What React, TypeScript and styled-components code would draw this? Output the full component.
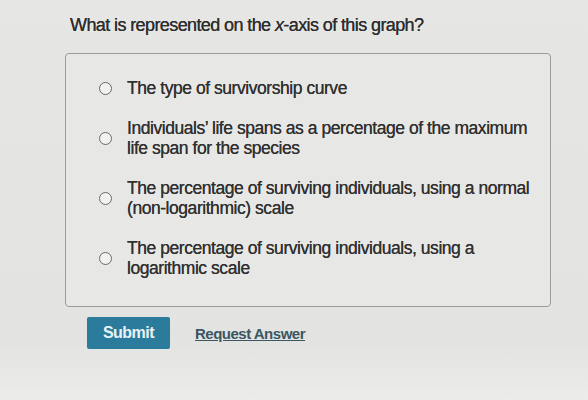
import { useState } from 'react';
import styled, { createGlobalStyle } from 'styled-components';

const GlobalStyle = createGlobalStyle`
  html, body {
    margin: 0;
    padding: 0;
    background: #e4e4e2;
  }
  body {
    font-family: 'Liberation Sans', Arial, sans-serif;
    color: #353535;
  }
`;

const choices = [
  'The type of survivorship curve',
  'Individuals’ life spans as a percentage of the maximum life span for the species',
  'The percentage of surviving individuals, using a normal (non-logarithmic) scale',
  'The percentage of surviving individuals, using a logarithmic scale',
];

const App = () => {
  const [selected, setSelected] = useState<number | null>(null);

  return (
    <>
      <GlobalStyle />
      <Page>
        <Question>
          What is represented on the <em>x</em>-axis of this graph?
        </Question>

        <ChoiceBox>
          {choices.map((text, i) => (
            <Choice key={i} onClick={() => setSelected(i)}>
              <Radio $checked={selected === i} />
              <ChoiceText>{text}</ChoiceText>
            </Choice>
          ))}
        </ChoiceBox>

        <Actions>
          <SubmitButton>Submit</SubmitButton>
          <RequestLink href="#">Request Answer</RequestLink>
        </Actions>
      </Page>
    </>
  );
};

const Page = styled.div`
  width: 588px;
  height: 400px;
  box-sizing: border-box;
  padding: 14px 37px 0 65px;
  background: linear-gradient(180deg, #e6e6e4 0%, #e3e3e1 85%, #ececea 100%);
`;

const Question = styled.div`
  margin-left: 5px;
  font-size: 18px;
  line-height: 22px;
  letter-spacing: -0.6px;
  color: #2e2e2e;
  text-shadow: 0 0 0.6px #2e2e2e;

  em {
    font-style: italic;
  }
`;

const ChoiceBox = styled.div`
  margin-top: 17px;
  width: 486px;
  height: 254px;
  box-sizing: border-box;
  padding: 24px 20px 0 33px;
  border: 1px solid #9c9c9a;
  border-radius: 4px;
  background: #e7e7e5;
  display: flex;
  flex-direction: column;
  gap: 20px;
`;

const Choice = styled.label`
  display: flex;
  align-items: center;
  gap: 15px;
  cursor: pointer;
`;

const Radio = styled.span<{ $checked: boolean }>`
  flex: none;
  width: 13px;
  height: 13px;
  box-sizing: border-box;
  border-radius: 50%;
  border: 1.5px solid #6a6a6a;
  background: ${({ $checked }) => ($checked ? 'radial-gradient(#1e7fa1 45%, #f2f2f0 50%)' : '#f2f2f0')};
`;

const ChoiceText = styled.span`
  max-width: 405px;
  font-size: 17.5px;
  line-height: 20px;
  letter-spacing: -0.45px;
  color: #313131;
  text-shadow: 0 0 0.5px #313131;
`;

const Actions = styled.div`
  margin-top: 10px;
  padding-left: 22px;
  display: flex;
  align-items: center;
  gap: 25px;
`;

const SubmitButton = styled.button`
  width: 83px;
  height: 32px;
  border: none;
  border-radius: 2px;
  background: #2b7c9c;
  color: #e8f2f5;
  font-family: 'Liberation Sans', Arial, sans-serif;
  font-size: 16px;
  font-weight: bold;
  letter-spacing: -0.5px;
  cursor: pointer;
`;

const RequestLink = styled.a`
  font-size: 15px;
  font-weight: bold;
  letter-spacing: -0.5px;
  color: #3a5763;
  text-decoration: underline;
`;

export default App;
